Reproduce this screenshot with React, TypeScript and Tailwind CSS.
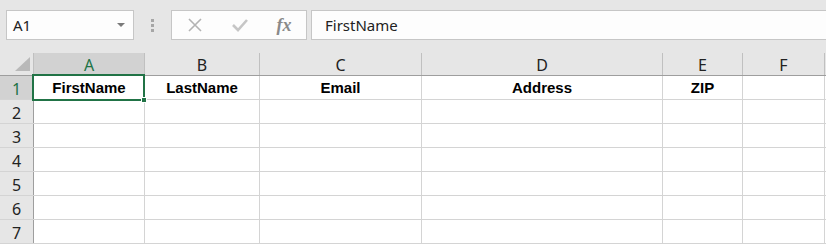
import React from "react";

const cols = [
  { l: "A", w: "w-[111px]", v: "FirstName" },
  { l: "B", w: "w-[115px]", v: "LastName" },
  { l: "C", w: "w-[162px]", v: "Email" },
  { l: "D", w: "w-[241px]", v: "Address" },
  { l: "E", w: "w-[80px]", v: "ZIP" },
  { l: "F", w: "w-[82px]", v: "" },
];

const uiFont = { fontFamily: '"Noto Sans", "Open Sans", sans-serif' };
const cellFont = { fontFamily: '"Liberation Sans", Arial, sans-serif' };

export default function App() {
  return (
    <div className="w-[826px] h-[244px] overflow-hidden bg-white select-none" style={uiFont}>
      {/* top bar */}
      <div className="h-[53px] bg-[#e6e6e6] flex items-start pt-[10px] pl-[6px]">
        <div className="w-[128px] h-[30px] bg-[#fdfdfd] border border-[#c6c6c6] flex items-center pl-[6px] pr-[8px] justify-between">
          <span className="text-[15px] text-[#222]">A1</span>
          <svg width="8" height="4" viewBox="0 0 8 4">
            <path d="M0 0 L8 0 L4 4 Z" fill="#7a7a7a" />
          </svg>
        </div>
        <div className="w-[37px] h-[30px] flex flex-col items-center justify-center gap-[2px]">
          <div className="w-[3px] h-[3px] bg-[#a6a6a6]" />
          <div className="w-[3px] h-[3px] bg-[#a6a6a6]" />
          <div className="w-[3px] h-[3px] bg-[#a6a6a6]" />
        </div>
        <div className="w-[136px] h-[30px] bg-[#fdfdfd] border border-[#c6c6c6] flex items-center">
          <div className="w-[45px] flex justify-center">
            <svg width="16" height="16" viewBox="0 0 16 16">
              <path d="M2 2 L14 14 M14 2 L2 14" stroke="#b3b3b3" strokeWidth="1.6" />
            </svg>
          </div>
          <div className="w-[45px] flex justify-center">
            <svg width="18" height="16" viewBox="0 0 18 16">
              <path d="M2 8 L7 13 L16 3" stroke="#c6c6c6" strokeWidth="2.6" fill="none" />
            </svg>
          </div>
          <div className="w-[44px] flex justify-center">
            <span
              className="text-[18px] italic font-bold text-[#8a8a8a] leading-none"
              style={{ fontFamily: '"Liberation Serif", "Times New Roman", serif' }}
            >
              fx
            </span>
          </div>
        </div>
        <div className="ml-[4px] flex-1 h-[30px] bg-[#fdfdfd] border-y border-l border-[#c6c6c6] flex items-center pl-[13px]">
          <span className="text-[15px] text-[#222]">FirstName</span>
        </div>
      </div>

      {/* column header */}
      <div className="flex h-[23px] bg-[#e6e6e6] border-b border-[#9e9e9e]">
        <div className="w-[34px] border-r border-[#c0c0c0] relative">
          <svg className="absolute left-[15px] top-[4px]" width="15" height="14" viewBox="0 0 15 14">
            <path d="M15 0 L15 14 L0 14 Z" fill="#b9b9b9" />
          </svg>
        </div>
        {cols.map((c, i) => (
          <div
            key={c.l}
            className={`${c.w} shrink-0 border-r border-[#c0c0c0] flex items-center justify-center text-[16px] leading-none pt-[1px] ${
              i === 0 ? "bg-[#d2d2d2] text-[#217346]" : "text-[#222]"
            }`}
          >
            {c.l}
          </div>
        ))}
        <div className="flex-1" />
      </div>

      {/* rows */}
      {[1, 2, 3, 4, 5, 6, 7].map((r) => (
        <div key={r} className="flex h-[24px] border-b border-[#d4d4d4]">
          <div
            className={`w-[34px] shrink-0 border-r border-[#9e9e9e] flex items-center justify-center text-[16px] leading-none pt-[2px] ${
              r === 1 ? "bg-[#d2d2d2] text-[#217346]" : "bg-[#e6e6e6] text-[#222]"
            }`}
          >
            {r}
          </div>
          {cols.map((c, i) => (
            <div
              key={c.l}
              className={`${c.w} shrink-0 border-r border-[#d4d4d4] flex items-center justify-center relative`}
            >
              {r === 1 && (
                <span className="text-[15px] font-bold text-black pt-[2px]" style={cellFont}>
                  {c.v}
                </span>
              )}
              {r === 1 && i === 0 && (
                <div className="absolute -left-[2px] -top-[2px] -right-[1px] -bottom-[2px] border-2 border-[#217346] z-10">
                  <div className="absolute -right-[4px] -bottom-[4px] w-[6px] h-[6px] bg-[#217346] border border-white" />
                </div>
              )}
            </div>
          ))}
          <div className="flex-1" />
        </div>
      ))}
    </div>
  );
}
